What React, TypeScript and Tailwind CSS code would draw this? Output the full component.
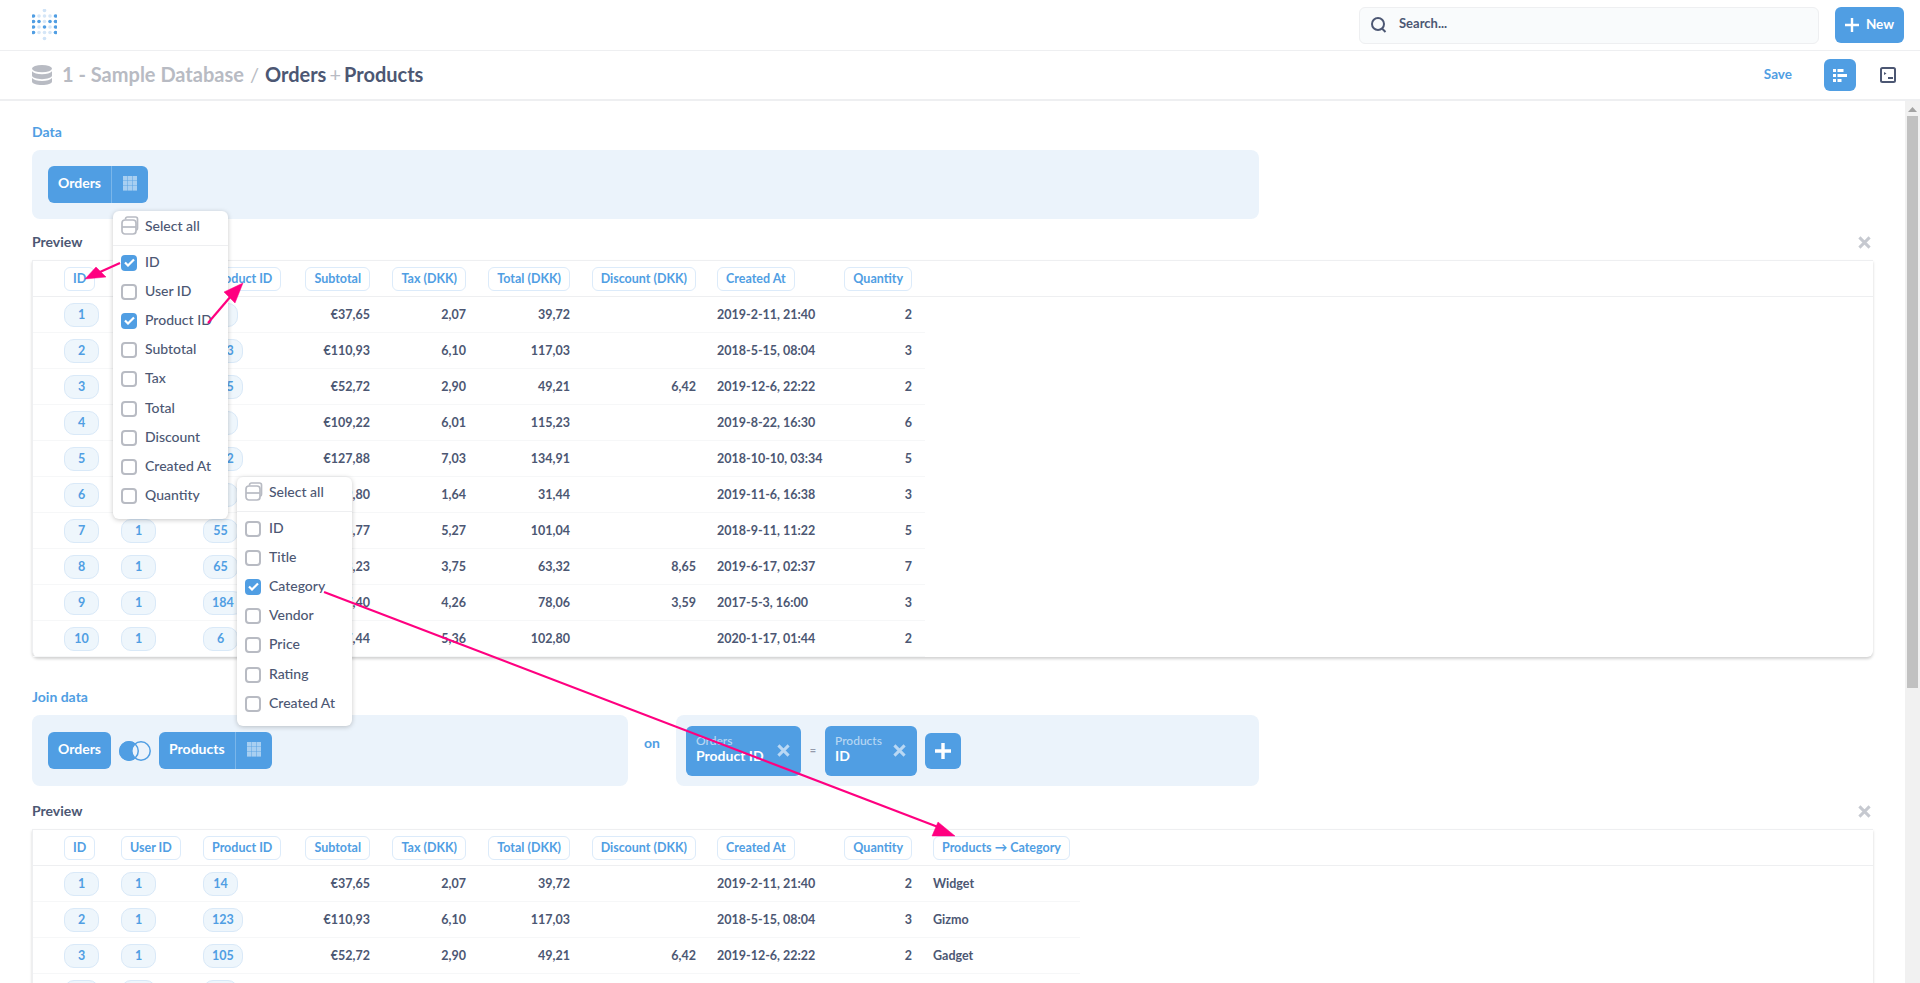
import React from 'react';

const columns = [
  { key: 'id', title: 'ID', cell: '' },
  { key: 'user', title: 'User ID', cell: '' },
  { key: 'product', title: 'Product ID', cell: '' },
  { key: 'subtotal', title: 'Subtotal', cell: 'justify-end pr-[22px]' },
  { key: 'tax', title: 'Tax (DKK)', cell: 'justify-end pr-[22px]' },
  { key: 'total', title: 'Total (DKK)', cell: 'justify-end pr-[22px]' },
  { key: 'discount', title: 'Discount (DKK)', cell: 'justify-end pr-[21px]' },
  { key: 'created', title: 'Created At', cell: '' },
  { key: 'quantity', title: 'Quantity', cell: 'justify-end pr-[21px]' },
];

const rows = [
  ['1', '1', '14', '€37,65', '2,07', '39,72', '', '2019-2-11, 21:40', '2', 'Widget'],
  ['2', '1', '123', '€110,93', '6,10', '117,03', '', '2018-5-15, 08:04', '3', 'Gizmo'],
  ['3', '1', '105', '€52,72', '2,90', '49,21', '6,42', '2019-12-6, 22:22', '2', 'Gadget'],
  ['4', '1', '94', '€109,22', '6,01', '115,23', '', '2019-8-22, 16:30', '6', 'Widget'],
  ['5', '1', '132', '€127,88', '7,03', '134,91', '', '2018-10-10, 03:34', '5', 'Gadget'],
  ['6', '1', '60', '€29,80', '1,64', '31,44', '', '2019-11-6, 16:38', '3', 'Gizmo'],
  ['7', '1', '55', '€95,77', '5,27', '101,04', '', '2018-9-11, 11:22', '5', 'Widget'],
  ['8', '1', '65', '€68,23', '3,75', '63,32', '8,65', '2019-6-17, 02:37', '7', 'Gadget'],
  ['9', '1', '184', '€77,40', '4,26', '78,06', '3,59', '2017-5-3, 16:00', '3', 'Gizmo'],
  ['10', '1', '6', '€97,44', '5,36', '102,80', '', '2020-1-17, 01:44', '2', 'Widget'],
];

const GRID = 'grid grid-cols-[57px_82px_102px_87px_96px_104px_125px_117px_99px_149px]';

const Logo = () => {
  const xs = [1.5, 7, 12.5, 18, 23.5];
  const ys = [7, 12.5, 18, 23.5];
  const dark = ['10001', '11011', '10101', '10001'];
  return (
    <svg width="25" height="32" viewBox="0 0 25 32">
      <circle cx="12.5" cy="1.5" r="1.8" fill="#cfe3f7" />
      <circle cx="12.5" cy="29.5" r="1.8" fill="#cfe3f7" />
      {ys.map((y, r) =>
        xs.map((x, c) => (
          <circle key={`${r}-${c}`} cx={x} cy={y} r="1.8" fill={dark[r][c] === '1' ? '#509ee3' : '#d5e6f7'} />
        ))
      )}
    </svg>
  );
};

const DatabaseIcon = () => (
  <svg width="20" height="20" viewBox="0 0 20 20" fill="#b8bbc3">
    <ellipse cx="10" cy="3.6" rx="10" ry="3.6" />
    <path d="M0 6.2c1.6 2 5.4 3 10 3s8.400-1 10-3v4.400c0 2-4.500 3.600-10 3.600S0 12.600 0 10.600z" />
    <path d="M0 13c1.600 2 5.400 3 10 3s8.400-1 10-3v3.400c0 2-4.500 3.600-10 3.600S0 18.400 0 16.400z" />
  </svg>
);

const TableIcon = () => (
  <svg width="14" height="15" viewBox="0 0 14 15" fill="#fff" fillOpacity="0.5">
    {[0, 5, 10].map(y =>
      [0, 4.8, 9.600].map(x => <rect key={`${x}-${y}`} x={x} y={y} width="4.400" height="4.600" />)
    )}
  </svg>
);

const CloseIcon = ({ color, size }: { color: string; size: number }) => (
  <svg width={size} height={size} viewBox="0 0 14 14" stroke={color} strokeWidth="3.200">
    <path d="M1.500 1.500l11 11M12.500 1.500l-11 11" />
  </svg>
);

const SelectAllIcon = () => (
  <svg width="18" height="19" viewBox="0 0 18 19" fill="none" stroke="#b8bbc3" strokeWidth="1.700">
    <path d="M4.500 3.500V3a2 2 0 0 1 2-2h8a2 2 0 0 1 2 2v9a2 2 0 0 1-2 2" />
    <rect x="1" y="4" width="14" height="14" rx="3" fill="#fff" />
    <path d="M1 11h14" />
  </svg>
);

const Checkbox = ({ checked }: { checked: boolean }) =>
  checked ? (
    <span className="w-4 h-4 rounded-[4px] bg-[#509ee3] flex items-center justify-center shrink-0">
      <svg width="11" height="9" viewBox="0 0 11 9" fill="none" stroke="#fff" strokeWidth="2.200">
        <path d="M1 4.500l3 3 6-6" />
      </svg>
    </span>
  ) : (
    <span className="w-4 h-4 rounded-[4px] border-2 border-[#b8bbc3] bg-white shrink-0" />
  );

const FieldPicker = ({ className, fields }: { className: string; fields: [string, boolean][] }) => (
  <div className={`absolute w-[115px] bg-white rounded-md shadow-[0_1px_5px_rgba(0,0,0,0.22)] text-sm text-[#4c5773] font-medium ${className}`}>
    <div className="h-[35px] flex items-center gap-[6px] pl-2 pb-[5px] border-b border-[#eeeff1]">
      <SelectAllIcon />
      <span>Select all</span>
    </div>
    <div className="pt-[2px] pb-2">
      {fields.map(([name, checked]) => (
        <div key={name} className="h-[29.200px] flex items-center gap-2 pl-2">
          <Checkbox checked={checked} />
          <span className="mb-[2px]">{name}</span>
        </div>
      ))}
    </div>
  </div>
);

const Chip = ({ label, grid }: { label: string; grid?: boolean }) => (
  <div className="h-[37px] flex items-center rounded-md bg-[#509ee3] text-white text-sm font-bold">
    <span className="px-[10px] mb-[3px]">{label}</span>
    {grid && (
      <span className="h-full w-[37px] pb-[3px] flex items-center justify-center border-l border-[#7ab6ea]">
        <TableIcon />
      </span>
    )}
  </div>
);

const JoinField = ({ table, field, className }: { table: string; field: string; className: string }) => (
  <div className={`h-[50px] rounded-md bg-[#509ee3] flex items-center justify-between pl-[10px] pr-[11px] ${className}`}>
    <div className="flex flex-col mb-[3px]">
      <span className="text-xs leading-[14px] text-white/60 font-medium">{table}</span>
      <span className="text-sm leading-[16px] text-white font-bold">{field}</span>
    </div>
    <CloseIcon color="#ffffff99" size={13} />
  </div>
);

const Preview = ({ extra, count, width }: { extra?: boolean; count: number; width: string }) => (
  <div className="w-[1841px]">
    <div className="flex items-center justify-between h-5 mb-2 pr-[2px]">
      <span className="text-sm font-bold text-[#4c5773]">Preview</span>
      <CloseIcon color="#c6c9d0" size={13} />
    </div>
    <div className="rounded-b-md border-l border-t border-[#eeeff1] shadow-[0_2px_3px_rgba(0,0,0,0.18)] bg-white text-[12.500px] font-bold text-[#4c5773]">
      <div className={`${GRID} h-9 pl-[31px] items-center border-b border-[#eeeff1] text-[#509ee3]`}>
        {columns.map(col => (
          <div key={col.key} className={`flex ${col.cell}`}>
            <span className="h-6 flex items-center px-2 pt-[2px] rounded-md border border-[#dcebfa] bg-white whitespace-nowrap">{col.title}</span>
          </div>
        ))}
        {extra && (
          <div className="flex">
            <span className="h-6 flex items-center px-2 pt-[2px] rounded-md border border-[#dcebfa] bg-white whitespace-nowrap">Products → Category</span>
          </div>
        )}
      </div>
      {rows.slice(0, count).map(row => (
        <div key={row[0]} className={`${GRID} ${width} h-9 pl-[31px] items-center border-b border-[#f6f7f8]`}>
          {columns.map((col, i) => (
            <div key={col.key} className={`flex whitespace-nowrap ${col.cell}`}>
              {i < 3 ? (
                <span className="h-6 min-w-[35px] flex items-center justify-center px-2 pt-[2px] rounded-[10px] border border-[#d9e9f8] bg-[#eef6fc] text-[#509ee3]">{row[i]}</span>
              ) : (
                <span className="pt-[2px]">{row[i]}</span>
              )}
            </div>
          ))}
          {extra && <div className="pt-[2px]">{row[9]}</div>}
        </div>
      ))}
    </div>
  </div>
);

const App = () => (
  <div className="relative w-screen h-screen overflow-hidden bg-white flex flex-col font-['Lato',sans-serif]">
    <header className="h-[51px] shrink-0 border-b border-[#eeeff1] flex items-center pl-8 pr-4">
      <Logo />
      <div className="ml-auto w-[460px] h-[37px] rounded-md border border-[#eeeff1] bg-[#f9fbfc] flex items-center pl-[11px] text-[13px] font-bold text-[#4c5773]">
        <svg width="16" height="16" viewBox="0 0 16 16" fill="none" stroke="#4c5773" strokeWidth="2">
          <circle cx="7" cy="7" r="6" />
          <path d="M11 11.500l3.500 3.500" />
        </svg>
        <span className="ml-3 mb-[2px]">Search...</span>
      </div>
      <button className="ml-4 w-[69px] h-9 rounded-md bg-[#509ee3] text-white text-[13.500px] font-bold flex items-center justify-center gap-[7px]">
        <svg width="14" height="14" viewBox="0 0 14 14" stroke="#fff" strokeWidth="2.400">
          <path d="M7 0v14M0 7h14" />
        </svg>
        <span className="mb-[2px]">New</span>
      </button>
    </header>

    <div className="h-[50px] shrink-0 border-b-2 border-[#eeeff1] flex items-center pl-8 pr-6 text-xl font-bold">
      <DatabaseIcon />
      <div className="flex items-center mb-[3px]">
        <span className="ml-[10px] text-[#b8bbc3]">1 - Sample Database</span>
        <span className="ml-[6px] text-[#b8bbc3] font-normal">/</span>
        <span className="ml-[6px] text-[#4c5773]">Orders</span>
        <span className="mx-[3px] text-[#b8bbc3] font-normal">+</span>
        <span className="text-[#4c5773]">Products</span>
      </div>
      <span className="ml-auto mb-[2px] text-[13.500px] text-[#509ee3]">Save</span>
      <span className="ml-8 w-8 h-8 rounded-md bg-[#509ee3] flex items-center justify-center">
        <svg width="14" height="13" viewBox="0 0 14 13" fill="#fff">
          <rect x="0" y="0" width="3" height="3" />
          <rect x="4.500" y="0" width="6" height="3" />
          <rect x="0" y="5" width="3" height="3" />
          <rect x="4.500" y="5" width="9.500" height="3" />
          <rect x="0" y="10" width="3" height="3" />
          <rect x="4.500" y="10" width="4" height="3" />
        </svg>
      </span>
      <span className="ml-6 w-4 h-4 flex items-center justify-center">
        <svg width="16" height="16" viewBox="0 0 16 16">
          <rect x="1" y="1" width="14" height="14" rx="1.500" fill="none" stroke="#4c5773" strokeWidth="2" />
          <path d="M4 5l2.500 1.500L4 8z" fill="#4c5773" />
          <rect x="8" y="10" width="5" height="2" fill="#4c5773" />
        </svg>
      </span>
    </div>

    <div className="flex-1 flex min-h-0">
      <main className="flex-1 overflow-hidden pl-8 pt-[21px]">
        <div className="h-5 mb-2 text-sm font-bold text-[#509ee3]">Data</div>
        <div className="w-[1227px] h-[69px] rounded-lg bg-[#ebf3fb] pl-4 pt-4">
          <div className="inline-flex">
            <Chip label="Orders" grid />
          </div>
        </div>

        <div className="mt-[13px]">
          <Preview count={10} width="w-[892px]" />
        </div>

        <div className="mt-[30px] h-5 mb-2 text-sm font-bold text-[#509ee3]">Join data</div>
        <div className="w-[1227px] h-[71px] flex">
          <div className="w-[596px] h-full rounded-lg bg-[#ebf3fb] pl-4 pt-[17px] flex items-start">
            <Chip label="Orders" />
            <svg className="mx-2 mt-[9px]" width="32" height="20" viewBox="0 0 32 20" fill="none">
              <circle cx="10" cy="10" r="10" fill="#509ee3" />
              <circle cx="22" cy="10" r="9.200" fill="#ebf3fb" stroke="#509ee3" strokeWidth="1.500" />
              <circle cx="10" cy="10" r="9.250" stroke="#509ee3" strokeWidth="1.500" />
            </svg>
            <Chip label="Products" grid />
          </div>
          <div className="w-12 text-center text-sm font-bold text-[#509ee3] pt-[18px]">on</div>
          <div className="flex-1 h-full rounded-lg bg-[#ebf3fb] pl-[10px] flex items-center">
            <JoinField table="Orders" field="Product ID" className="w-[115px]" />
            <span className="w-6 text-center text-[11px] font-bold text-[#949aab]">=</span>
            <JoinField table="Products" field="ID" className="w-[92px]" />
            <span className="ml-2 w-9 h-9 rounded-md bg-[#509ee3] flex items-center justify-center">
              <svg width="16" height="16" viewBox="0 0 16 16" stroke="#fff" strokeWidth="3.400">
                <path d="M8 0v16M0 8h16" />
              </svg>
            </span>
          </div>
        </div>

        <div className="mt-[15px]">
          <Preview count={4} extra width="w-[1047px]" />
        </div>
      </main>

      {/* fake scrollbar, the browser's own does not show when photographed */}
      <div className="w-[15px] shrink-0 bg-[#f1f1f1] flex flex-col items-center">
        <svg className="mt-[6px]" width="9" height="5" viewBox="0 0 9 5" fill="#a3a3a3">
          <path d="M4.500 0L9 5H0z" />
        </svg>
        <div className="mt-[4px] w-[11px] h-[572px] bg-[#c1c1c1]" />
      </div>
    </div>

    <FieldPicker
      className="left-[113px] top-[211px]"
      fields={[
        ['ID', true],
        ['User ID', false],
        ['Product ID', true],
        ['Subtotal', false],
        ['Tax', false],
        ['Total', false],
        ['Discount', false],
        ['Created At', false],
        ['Quantity', false],
      ]}
    />
    <FieldPicker
      className="left-[237px] top-[477px]"
      fields={[
        ['ID', false],
        ['Title', false],
        ['Category', true],
        ['Vendor', false],
        ['Price', false],
        ['Rating', false],
        ['Created At', false],
      ]}
    />

    {/* annotation arrows drawn over the screenshot */}
    <svg className="absolute inset-0 pointer-events-none" width="1920" height="983" viewBox="0 0 1920 983" fill="none" stroke="#ff0080" strokeWidth="2.200">
      <path d="M120 263L100 272" />
      <path d="M85 279L96 267L106 277z" fill="#ff0080" strokeWidth="0.500" />
      <path d="M208 323L231 296" />
      <path d="M243 283L224 292L235 303z" fill="#ff0080" strokeWidth="0.500" />
      <path d="M324 592L938 827" />
      <path d="M955 836L932 836L938 822z" fill="#ff0080" strokeWidth="0.500" />
    </svg>
  </div>
);

export default App;
